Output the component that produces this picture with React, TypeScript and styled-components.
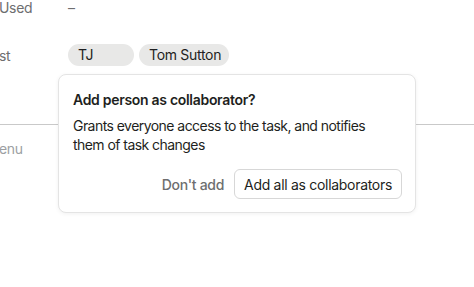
import styled, { createGlobalStyle } from "styled-components"

const GlobalStyle = createGlobalStyle`
  html, body {
    margin: 0;
    padding: 0;
    background: #ffffff;
  }
  body {
    font-family: Inter, "Noto Sans", "Liberation Sans", sans-serif;
    font-size: 14px;
    letter-spacing: -0.3px;
    color: #1e1f21;
    -webkit-font-smoothing: antialiased;
  }
`;

export default function App() {
    return (
        <Page>
            <GlobalStyle />
            <FieldRow $height={14}>
                <Label>Used</Label>
                <Value>–</Value>
            </FieldRow>
            <FieldRow $height={22} $top={30}>
                <Label>st</Label>
                <Pills>
                    <Pill $width={66}>TJ</Pill>
                    <Pill $width={90}>Tom Sutton</Pill>
                </Pills>
            </FieldRow>
            <Divider />
            <FieldRow $height={16} $top={15}>
                <Label $faded>enu</Label>
            </FieldRow>

            <Popover>
                <Title>Add person as collaborator?</Title>
                <Body>Grants everyone access to the task, and notifies them of task changes</Body>
                <Actions>
                    <GhostButton>Don't add</GhostButton>
                    <OutlineButton>Add all as collaborators</OutlineButton>
                </Actions>
            </Popover>
        </Page>
    )
}

const Page = styled.div`
    position: relative;
    width: 474px;
    height: 287px;
    overflow: hidden;
`;

const FieldRow = styled.div<{ $height: number; $top?: number }>`
    display: flex;
    align-items: center;
    height: ${p => p.$height}px;
    margin-top: ${p => p.$top ?? 0}px;
`;

const Label = styled.div<{ $faded?: boolean }>`
    width: 68px;
    margin-left: -1px;
    flex-shrink: 0;
    color: ${p => p.$faded ? "#9ca0a3" : "#6d6e6f"};
    font-size: 14px;
`;

const Value = styled.div`
    color: #6d6e6f;
    margin-left: 1px;
`;

const Pills = styled.div`
    display: flex;
    gap: 5px;
    margin-left: 1px;
`;

const Pill = styled.div<{ $width: number }>`
    box-sizing: border-box;
    width: ${p => p.$width}px;
    height: 22px;
    padding: 0 10px;
    border-radius: 11px;
    background: #e8e8e7;
    color: #1e1f21;
    font-size: 14px;
    line-height: 22px;
    white-space: nowrap;
`;

const Divider = styled.div`
    height: 1px;
    background: #c9c9c9;
    margin-top: 58px;
`;

const Popover = styled.div`
    position: absolute;
    left: 58px;
    top: 74px;
    width: 358px;
    height: 139px;
    box-sizing: border-box;
    padding: 16px 14px 13px 14px;
    background: #ffffff;
    border: 1px solid #e4e4e4;
    border-radius: 8px;
    box-shadow: 0 1px 4px rgba(0, 0, 0, 0.06);
    display: flex;
    flex-direction: column;
`;

const Title = styled.div`
    font-weight: 600;
    font-size: 14px;
    line-height: 18px;
`;

const Body = styled.div`
    max-width: 310px;
    margin-top: 7px;
    font-size: 14px;
    letter-spacing: -0.55px;
    line-height: 19px;
    color: #1e1f21;
`;

const Actions = styled.div`
    display: flex;
    justify-content: flex-end;
    align-items: center;
    gap: 10px;
    margin-top: auto;
    margin-right: -1px;
`;

const GhostButton = styled.button`
    border: none;
    background: none;
    padding: 0;
    font-family: inherit;
    font-size: 14px;
    letter-spacing: inherit;
    font-weight: 500;
    color: #6d6e6f;
`;

const OutlineButton = styled.button`
    height: 30px;
    padding: 0 9px;
    border: 1px solid #d7d7d7;
    border-radius: 6px;
    background: #ffffff;
    font-family: inherit;
    font-size: 14px;
    letter-spacing: inherit;
    color: #1e1f21;
`;
